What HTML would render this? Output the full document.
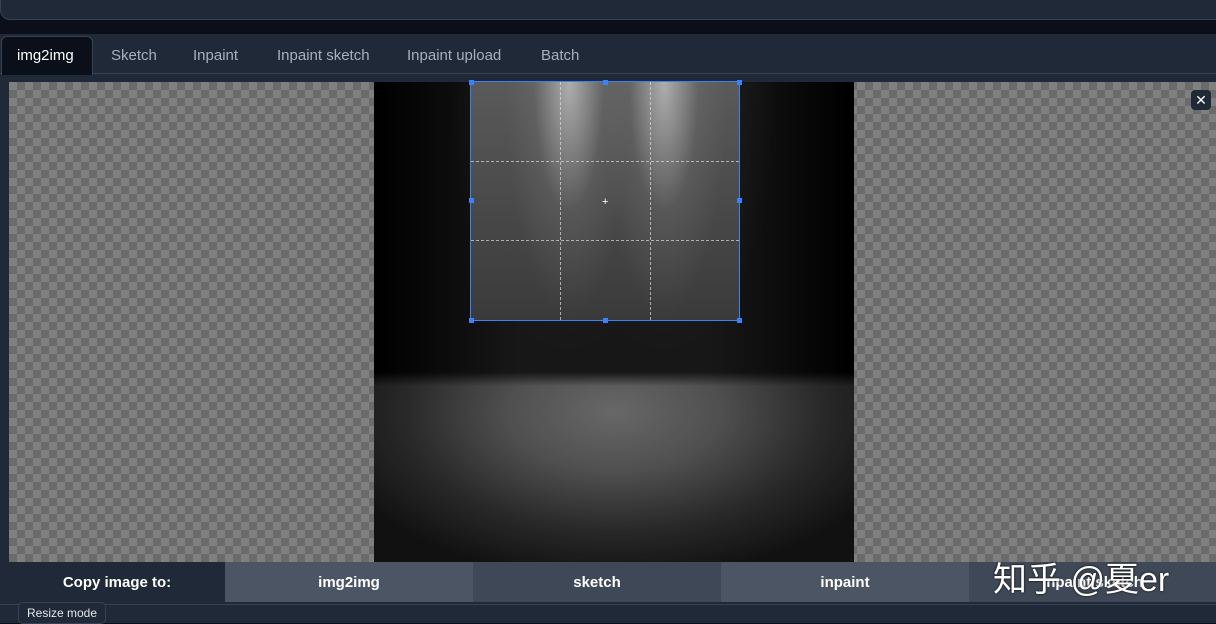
<!DOCTYPE html>
<html><head><style>
body{margin:0;width:1216px;height:623px;background:#0b0f19;font-family:"Liberation Sans","Noto Sans CJK SC",sans-serif;overflow:hidden;position:relative}
.a{position:absolute}
.chk{background-color:#808080;background-image:linear-gradient(45deg,#6b6b6b 25%,transparent 25%,transparent 75%,#6b6b6b 75%),linear-gradient(45deg,#6b6b6b 25%,transparent 25%,transparent 75%,#6b6b6b 75%);background-size:16px 16px;background-position:0 0,8px 8px}
.tab{position:absolute;top:47px;font-size:15px;color:#a8b0bd}
.btn{position:absolute;top:562px;height:40px;line-height:42px;text-align:center;color:#fff;font-weight:bold;font-size:15px}
</style></head><body>
<div class="a" style="left:0;top:-10px;width:1230px;height:28px;background:#1f2937;border-radius:10px;border:1px solid #374151"></div>
<div class="a" style="left:0;top:34px;width:1216px;height:589px;background:#1f2937"></div>
<div class="a" style="left:0;top:73px;width:1216px;height:1px;background:#374151"></div>
<div class="a" style="left:1px;top:36px;width:90px;height:38px;background:#0b0f19;border:1px solid #374151;border-bottom:none;border-radius:6px 6px 0 0"></div>
<div class="tab" style="left:17px;color:#fff">img2img</div>
<div class="tab" style="left:111px">Sketch</div>
<div class="tab" style="left:193px">Inpaint</div>
<div class="tab" style="left:277px">Inpaint sketch</div>
<div class="tab" style="left:407px">Inpaint upload</div>
<div class="tab" style="left:541px">Batch</div>
<div class="a chk" style="left:9px;top:82px;width:1207px;height:480px"></div>
<div class="a" style="left:374px;top:82px;width:480px;height:480px;background:
radial-gradient(ellipse 140px 320px at 195px 0,rgba(200,200,200,.45),rgba(80,80,80,.15) 50%,rgba(0,0,0,0) 85%),
radial-gradient(ellipse 140px 320px at 290px 0,rgba(200,200,200,.45),rgba(80,80,80,.15) 50%,rgba(0,0,0,0) 85%),
linear-gradient(90deg,#000,#1c1c1c 30%,#1c1c1c 70%,#000);"></div>
<div class="a" style="left:374px;top:372px;width:480px;height:190px;background:
radial-gradient(ellipse 300px 170px at 240px 40px,#7a7a7a,#5e5e5e 35%,#303030 70%,#141414 100%);
-webkit-mask:linear-gradient(180deg,transparent 0,#000 14px);mask:linear-gradient(180deg,transparent 0,#000 14px)"></div>
<div class="a" style="left:374px;top:82px;width:480px;height:480px;background:rgba(0,0,0,.15)"></div>
<div class="a" style="left:471px;top:82px;width:268px;height:238px;background:
radial-gradient(ellipse 70px 260px at 98px 0,rgba(230,230,230,.6),rgba(120,120,120,.3) 50%,rgba(0,0,0,0) 90%),
radial-gradient(ellipse 70px 260px at 193px 0,rgba(230,230,230,.6),rgba(120,120,120,.3) 50%,rgba(0,0,0,0) 90%),
linear-gradient(180deg,#5a5a5a,#3a3a3a);outline:1px solid #3b82f6"></div>
<div class="a" style="left:560px;top:82px;width:89px;height:238px;border-left:1px dashed #ddd;border-right:1px dashed #ddd;opacity:.7"></div>
<div class="a" style="left:471px;top:161px;width:268px;height:78px;border-top:1px dashed #ddd;border-bottom:1px dashed #ddd;opacity:.7"></div>
<div class="a" style="left:602px;top:197px;color:#fff;font-size:11px;line-height:10px">+</div>
<div class="a" style="left:469px;top:80px;width:5px;height:5px;background:#3b82f6"></div>
<div class="a" style="left:603px;top:80px;width:5px;height:5px;background:#3b82f6"></div>
<div class="a" style="left:737px;top:80px;width:5px;height:5px;background:#3b82f6"></div>
<div class="a" style="left:469px;top:198px;width:5px;height:5px;background:#3b82f6"></div>
<div class="a" style="left:737px;top:198px;width:5px;height:5px;background:#3b82f6"></div>
<div class="a" style="left:469px;top:318px;width:5px;height:5px;background:#3b82f6"></div>
<div class="a" style="left:603px;top:318px;width:5px;height:5px;background:#3b82f6"></div>
<div class="a" style="left:737px;top:318px;width:5px;height:5px;background:#3b82f6"></div>
<div class="a" style="left:1191px;top:90px;width:20px;height:20px;background:#1f2937;border-radius:4px;color:#fff;text-align:center;line-height:20px;font-size:14px">✕</div>
<div class="btn" style="left:9px;width:216px;background:#1f2937">Copy image to:</div>
<div class="btn" style="left:225px;width:248px;background:#4b5563">img2img</div>
<div class="btn" style="left:473px;width:248px;background:#3f4856">sketch</div>
<div class="btn" style="left:721px;width:248px;background:#4b5563">inpaint</div>
<div class="btn" style="left:969px;width:247px;background:#3f4856">Inpaint sketch</div>
<div class="a" style="left:0;top:604px;width:1216px;height:1px;background:#374151"></div>
<div class="a" style="left:18px;top:602px;padding:0 8px;height:20px;line-height:20px;font-size:12px;color:#e5e7eb;background:#1f2937;border:1px solid #374151;border-radius:5px">Resize mode</div>
<div class="a" style="left:993px;top:552px;font-size:34px;color:#fff;text-shadow:0 0 2px #000">知乎 @夏er</div>
</body></html>
